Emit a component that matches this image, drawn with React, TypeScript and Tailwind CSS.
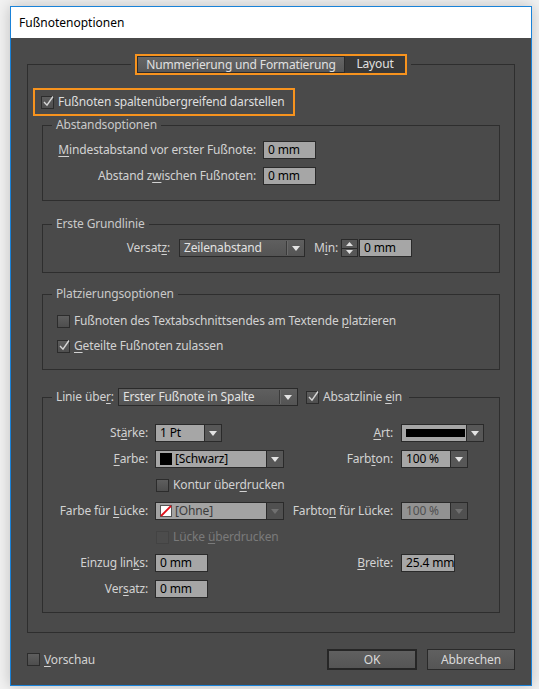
import React from "react";

// "&" marks the access-key letter, drawn underlined as in Windows dialogs
function Mnemonic({ text, className = "" }: { text: string; className?: string }) {
  const i = text.indexOf("&");
  if (i < 0) return <span className={className}>{text}</span>;
  return (
    <span className={className}>
      {text.slice(0, i)}
      <span className="underline underline-offset-[2px]">{text[i + 1]}</span>
      {text.slice(i + 2)}
    </span>
  );
}

function Arrow({ dim }: { dim?: boolean }) {
  return (
    <svg width="8" height="5" viewBox="0 0 8 5">
      <path d="M0 0h8L4 5z" fill={dim ? "#707070" : "#e4e4e4"} />
    </svg>
  );
}

function Checkbox({ checked, disabled }: { checked?: boolean; disabled?: boolean }) {
  return (
    <span
      className={`relative w-[13px] h-[13px] shrink-0 border ${
        disabled
          ? "border-[#434343] bg-[#4c4c4c]"
          : "border-[#2c2c2c] bg-gradient-to-b from-[#5e5e5e] to-[#4e4e4e]"
      }`}
    >
      {checked && (
        <svg className="absolute -top-[2px] left-[0px]" width="13" height="13" viewBox="0 0 13 13">
          <path d="M2 7l3 3.2L11 1.5" stroke="#d6d6d6" strokeWidth="1.4" fill="none" />
        </svg>
      )}
    </span>
  );
}

function CheckRow({ label, checked, disabled }: { label: string; checked?: boolean; disabled?: boolean }) {
  return (
    <div className={`h-[18px] flex items-center gap-[4px] ${disabled ? "text-[#7a7a7a]" : ""}`}>
      <Checkbox checked={checked} disabled={disabled} />
      <Mnemonic text={label} />
    </div>
  );
}

function Field({ value, w }: { value: string; w: string }) {
  return (
    <div className={`${w} h-[18px] border border-[#2a2a2a] bg-[#a6a6a6] text-black pl-[4px] leading-[16px] whitespace-nowrap`}>
      {value}
    </div>
  );
}

// editable combo: light field with a dark arrow button on the right
function Combo({
  w,
  children,
  tone = "normal",
}: {
  w: string;
  children: React.ReactNode;
  tone?: "normal" | "muted" | "disabled";
}) {
  const field =
    tone === "normal"
      ? "bg-[#a6a6a6] text-black"
      : tone === "muted"
      ? "bg-[#a3a3a3] text-[#3c3c3c]"
      : "bg-[#929292] text-[#505050]";
  return (
    <div className={`${w} h-[18px] border border-[#2a2a2a] flex`}>
      <div className={`flex-1 flex items-center pl-[4px] gap-[3px] leading-[16px] whitespace-nowrap ${field}`}>
        {children}
      </div>
      <div
        className={`w-[17px] border-l border-[#2a2a2a] flex items-center justify-center ${
          tone === "normal" ? "bg-[#575757]" : "bg-[#505050]"
        }`}
      >
        <Arrow dim={tone !== "normal"} />
      </div>
    </div>
  );
}

// popup button: dark face, light text, split arrow on the right
function Dropdown({ w, value }: { w: string; value: string }) {
  return (
    <div
      className={`${w} h-[18px] border border-[#2a2a2a] bg-gradient-to-b from-[#5f5f5f] to-[#545454] flex items-center text-[#e2e2e2] whitespace-nowrap`}
    >
      <span className="flex-1 pl-[4px] leading-[16px]">{value}</span>
      <span className="w-px h-[14px] bg-[#3a3a3a] shadow-[1px_0_0_#6a6a6a]" />
      <span className="w-[17px] flex justify-center">
        <Arrow />
      </span>
    </div>
  );
}

function Spinner() {
  return (
    <div className="w-[17px] h-[18px] border border-[#2a2a2a] flex flex-col bg-[#575757]">
      <div className="flex-1 flex items-center justify-center border-b border-[#2a2a2a]">
        <svg width="7" height="4" viewBox="0 0 7 4">
          <path d="M0 4h7L3.5 0z" fill="#e0e0e0" />
        </svg>
      </div>
      <div className="flex-1 flex items-center justify-center">
        <svg width="7" height="4" viewBox="0 0 7 4">
          <path d="M0 0h7L3.5 4z" fill="#e0e0e0" />
        </svg>
      </div>
    </div>
  );
}

function Group({
  title,
  className = "",
  children,
}: {
  title: React.ReactNode;
  className?: string;
  children: React.ReactNode;
}) {
  return (
    <fieldset className={`border border-[#2e2e2e] mx-[14px] ${className}`}>
      <legend className="ml-[9px] px-[4px] leading-[16px] text-[#c9c9c9]">{title}</legend>
      {children}
    </fieldset>
  );
}

function Label({ text, w }: { text: string; w: string }) {
  return <Mnemonic text={text} className={`${w} text-right whitespace-nowrap`} />;
}

export default function App() {
  return (
    <div className="w-[539px] h-[689px] bg-[#f2f2f2] pl-[10px] pt-[6px] font-['Noto_Sans',sans-serif] text-[12px] tracking-[-0.15px]">
      <div className="w-[522px] h-[680px] border border-[#1a82d8] flex flex-col shadow-[0_0_14px_rgba(0,0,0,0.22)]">
        <div className="h-[31px] shrink-0 bg-white flex items-center pl-[8px] text-black tracking-normal">Fußnotenoptionen</div>

        <div className="flex-1 bg-[#4a4a4a] px-[16px] pt-[16px] text-[#d2d2d2]">
          <fieldset className="border border-[#2e2e2e] pb-[19px]">
            <legend className="mx-auto px-[4px]">
              <div className="flex border-2 border-[#f7931e] text-[#e0e0e0] leading-[15px]">
                <div className="w-[208px] h-[17px] border border-[#2b2b2b] bg-gradient-to-b from-[#666] to-[#575757] text-center">
                  Nummerierung und Formatierung
                </div>
                <div className="w-[60px] h-[17px] bg-[#393939] text-center">Layout</div>
              </div>
            </legend>

            <div className="mt-[13px] ml-[5px] w-[262px] h-[28px] border-2 border-[#f7931e] flex items-center pl-[6px] text-[#dedede]">
              <CheckRow label="Fußnoten spaltenübergreifend darstellen" checked />
            </div>

            <Group title="Abstandsoptionen" className="mt-[1px] pt-[8px] pb-[15px]">
              <div className="flex flex-col gap-[8px]">
                <div className="flex items-center gap-[7px]">
                  <Label text="&Mindestabstand vor erster Fußnote:" w="w-[213px]" />
                  <Field value="0 mm" w="w-[53px]" />
                </div>
                <div className="flex items-center gap-[7px]">
                  <Label text="Abstand z&wischen Fußnoten:" w="w-[213px]" />
                  <Field value="0 mm" w="w-[53px]" />
                </div>
              </div>
            </Group>

            <Group title="Erste Grundlinie" className="mt-[15px] pt-[7px] pb-[15px]">
              <div className="flex items-center">
                <Label text="Versat&z:" w="w-[127px]" />
                <div className="ml-[9px]">
                  <Dropdown w="w-[126px]" value="Zeilenabstand" />
                </div>
                <Mnemonic text="M&in:" className="ml-[9px]" />
                <div className="ml-[3px]">
                  <Spinner />
                </div>
                <div className="ml-[1px]">
                  <Field value="0 mm" w="w-[53px]" />
                </div>
              </div>
            </Group>

            <Group title="Platzierungsoptionen" className="mt-[13px] pt-[10px] pb-[14px]">
              <div className="pl-[14px] flex flex-col gap-[7px]">
                <CheckRow label="Fußnoten des Textabschnittsendes am Textende &platzieren" />
                <CheckRow label="&Geteilte Fußnoten zulassen" checked />
              </div>
            </Group>

            <Group
              className="mt-[18px] pt-[18px] pb-[14px]"
              title={
                <span className="flex items-center text-[#d2d2d2]">
                  <Mnemonic text="Linie übe&r:" />
                  <span className="ml-[4px]">
                    <Dropdown w="w-[180px]" value="Erster Fußnote in Spalte" />
                  </span>
                  <span className="ml-[8px] mr-[3px]">
                    <CheckRow label="Absatzlinie &ein" checked />
                  </span>
                </span>
              }
            >
              <div className="flex flex-col gap-[8px]">
                <div className="flex items-center">
                  <Label text="St&ärke:" w="w-[105px]" />
                  <div className="ml-[7px] w-[130px]">
                    <Combo w="w-[67px]">1 Pt</Combo>
                  </div>
                  <Label text="&Art:" w="w-[108px]" />
                  <div className="ml-[8px]">
                    <Combo w="w-[83px]">
                      <span className="w-[59px] h-[8px] bg-black" />
                    </Combo>
                  </div>
                </div>

                <div className="flex items-center">
                  <Label text="&Farbe:" w="w-[105px]" />
                  <div className="ml-[7px] w-[130px]">
                    <Combo w="w-[129px]">
                      <span className="w-[12px] h-[12px] bg-black" />
                      [Schwarz]
                    </Combo>
                  </div>
                  <Label text="Farb&ton:" w="w-[108px]" />
                  <div className="ml-[8px]">
                    <Combo w="w-[67px]">100 %</Combo>
                  </div>
                </div>

                <div className="pl-[113px]">
                  <CheckRow label="Kontur über&drucken" />
                </div>

                <div className="flex items-center">
                  <Label text="Farbe für &Lücke:" w="w-[105px]" />
                  <div className="ml-[7px] w-[130px]">
                    <Combo w="w-[129px]" tone="muted">
                      <svg width="12" height="12" viewBox="0 0 12 12">
                        <rect x="0.5" y="0.5" width="11" height="11" fill="#fff" stroke="#555" />
                        <path d="M1 11L11 1" stroke="#e0101a" strokeWidth="1.8" />
                      </svg>
                      [Ohne]
                    </Combo>
                  </div>
                  <Label text="Farbto&n für Lücke:" w="w-[108px]" />
                  <div className="ml-[8px]">
                    <Combo w="w-[67px]" tone="disabled">
                      100 %
                    </Combo>
                  </div>
                </div>

                <div className="pl-[113px]">
                  <CheckRow label="Lücke &überdrucken" disabled />
                </div>

                <div className="flex items-center">
                  <Label text="Einzug lin&ks:" w="w-[105px]" />
                  <div className="ml-[7px] w-[130px]">
                    <Field value="0 mm" w="w-[53px]" />
                  </div>
                  <Label text="&Breite:" w="w-[108px]" />
                  <div className="ml-[8px]">
                    <Field value="25.4 mm" w="w-[54px]" />
                  </div>
                </div>

                <div className="flex items-center">
                  <Label text="Ver&satz:" w="w-[105px]" />
                  <div className="ml-[7px]">
                    <Field value="0 mm" w="w-[53px]" />
                  </div>
                </div>
              </div>
            </Group>
          </fieldset>

          <div className="mt-[16px] flex items-center">
            <CheckRow label="&Vorschau" />
            <button className="ml-auto w-[90px] h-[21px] border-2 border-[#262626] bg-gradient-to-b from-[#606060] to-[#555] text-[#dadada] leading-[17px]">
              OK
            </button>
            <button className="ml-[10px] w-[88px] h-[21px] border border-[#2a2a2a] bg-gradient-to-b from-[#606060] to-[#555] text-[#dadada] leading-[19px]">
              Abbrechen
            </button>
          </div>
        </div>
      </div>
    </div>
  );
}
